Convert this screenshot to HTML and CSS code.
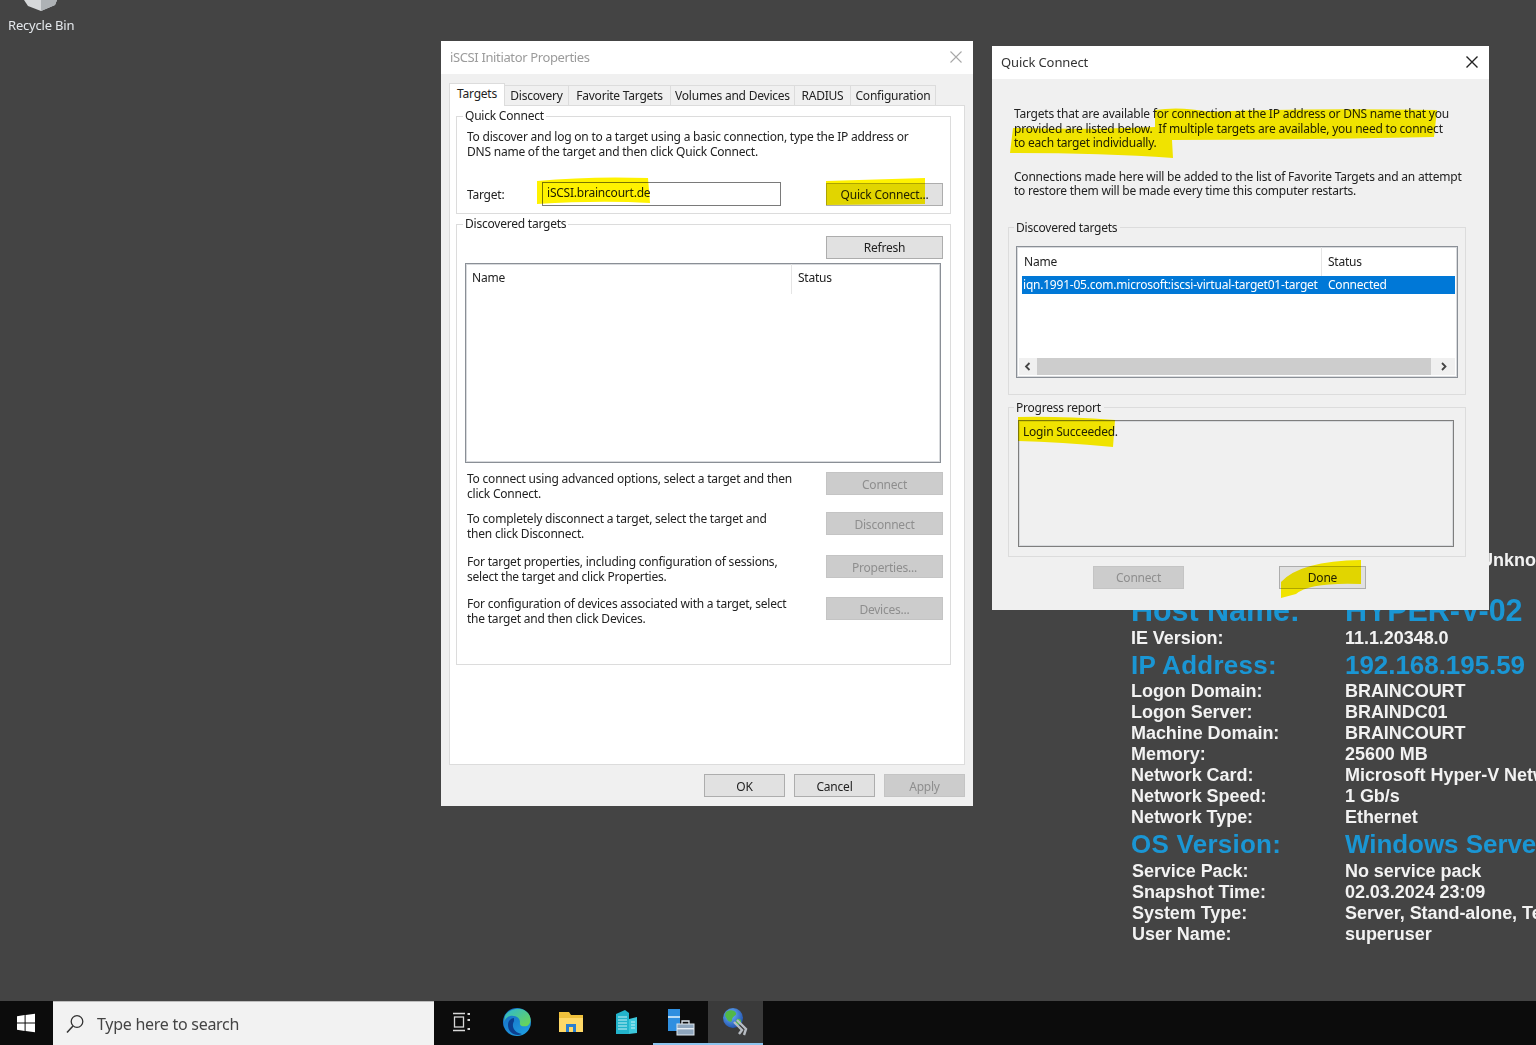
FILE: index.html
```html
<!DOCTYPE html>
<html lang="en">
<head>
  <meta charset="UTF-8">
  <title>iSCSI Initiator Properties</title>
  <link rel="stylesheet" href="styles.css">
</head>
<body>

  <div class="screen">
    <div class="desktop">

      <div class="recycle-bin">
        <svg class="recycle-icon" width="36" height="12" viewBox="0 0 36 12">
          <path d="M1 0 L34 0 L32 5 L18 11 L5 6 Z" fill="#d6d8da"/>
          <path d="M18 11 L32 5 L34 0 L18 0 Z" fill="#aeb2b5"/>
        </svg>
        <span>Recycle Bin</span>
      </div>

      <span class="info-cut">Unknown</span>

      <dl class="info">
        <dt class="host">Host Name:</dt><dd class="host">HYPER-V-02</dd>
        <dt>IE Version:</dt><dd>11.1.20348.0</dd>
        <dt class="big">IP Address:</dt><dd class="big">192.168.195.59</dd>
        <dt>Logon Domain:</dt><dd>BRAINCOURT</dd>
        <dt>Logon Server:</dt><dd>BRAINDC01</dd>
        <dt>Machine Domain:</dt><dd>BRAINCOURT</dd>
        <dt>Memory:</dt><dd>25600 MB</dd>
        <dt>Network Card:</dt><dd>Microsoft Hyper-V Network Adapter</dd>
        <dt>Network Speed:</dt><dd>1 Gb/s</dd>
        <dt>Network Type:</dt><dd>Ethernet</dd>
        <dt class="big os">OS Version:</dt><dd class="big os">Windows Server 2022</dd>
        <dt class="shifted">Service Pack:</dt><dd>No service pack</dd>
        <dt class="shifted">Snapshot Time:</dt><dd>02.03.2024 23:09</dd>
        <dt class="shifted">System Type:</dt><dd>Server, Stand-alone, Terminal</dd>
        <dt class="shifted">User Name:</dt><dd>superuser</dd>
      </dl>

      <!-- properties dialog -->
      <div class="window props">
        <div class="titlebar inactive">
          <span>iSCSI Initiator Properties</span>
          <svg class="close" width="12" height="12" viewBox="0 0 12 12"><path d="M0.5 0.5 L11.5 11.5 M11.5 0.5 L0.5 11.5"/></svg>
        </div>

        <div class="tabs">
          <div class="tab active">Targets</div>
          <div class="tab discovery">Discovery</div>
          <div class="tab favorite">Favorite Targets</div>
          <div class="tab volumes">Volumes and Devices</div>
          <div class="tab radius">RADIUS</div>
          <div class="tab config">Configuration</div>
        </div>

        <div class="tab-page">
          <fieldset class="group quick">
            <legend>Quick Connect</legend>
            <p class="intro">To discover and log on to a target using a basic connection, type the IP address or<br>DNS name of the target and then click Quick Connect.</p>
            <div class="target-row">
              <label>Target:</label>
              <div class="input">iSCSI.braincourt.de</div>
              <button class="btn wide">Quick Connect...</button>
            </div>
          </fieldset>

          <fieldset class="group discovered">
            <legend>Discovered targets</legend>
            <div class="refresh-row"><button class="btn wide">Refresh</button></div>
            <div class="list big-list">
              <div class="list-head">
                <div class="col-name">Name</div>
                <div class="col-status">Status</div>
              </div>
            </div>
            <div class="actions">
              <div class="action">
                <p>To connect using advanced options, select a target and then<br>click Connect.</p>
                <button class="btn wide" disabled>Connect</button>
              </div>
              <div class="action">
                <p>To completely disconnect a target, select the target and<br>then click Disconnect.</p>
                <button class="btn wide" disabled>Disconnect</button>
              </div>
              <div class="action">
                <p>For target properties, including configuration of sessions,<br>select the target and click Properties.</p>
                <button class="btn wide" disabled>Properties...</button>
              </div>
              <div class="action">
                <p>For configuration of devices associated with a target, select<br>the target and then click Devices.</p>
                <button class="btn wide" disabled>Devices...</button>
              </div>
            </div>
          </fieldset>
        </div>

        <div class="footer">
          <button class="btn">OK</button>
          <button class="btn">Cancel</button>
          <button class="btn" disabled>Apply</button>
        </div>
      </div>

      <!-- quick connect dialog -->
      <div class="window quick-win">
        <div class="titlebar">
          <span>Quick Connect</span>
          <svg class="close dark" width="12" height="12" viewBox="0 0 12 12"><path d="M0.5 0.5 L11.5 11.5 M11.5 0.5 L0.5 11.5"/></svg>
        </div>
        <div class="quick-body">
          <p>Targets that are available for connection at the IP address or DNS name that you<br>provided are listed below.&nbsp; If multiple targets are available, you need to connect<br>to each target individually.</p>
          <p class="second">Connections made here will be added to the list of Favorite Targets and an attempt<br>to restore them will be made every time this computer restarts.</p>

          <fieldset class="group found">
            <legend>Discovered targets</legend>
            <div class="list small-list">
              <div class="list-head">
                <div class="col-name">Name</div>
                <div class="col-status">Status</div>
              </div>
              <div class="list-row">
                <div class="col-name">iqn.1991-05.com.microsoft:iscsi-virtual-target01-target</div>
                <div class="col-status">Connected</div>
              </div>
              <div class="scrollbar">
                <svg width="18" height="17" viewBox="0 0 18 17"><path d="M10.5 5 L7 8.5 L10.5 12" /></svg>
                <div class="thumb"></div>
                <svg width="24" height="17" viewBox="0 0 24 17"><path d="M11 5 L14.5 8.5 L11 12" /></svg>
              </div>
            </div>
          </fieldset>

          <fieldset class="group progress">
            <legend>Progress report</legend>
            <div class="report">Login Succeeded.</div>
          </fieldset>

          <div class="quick-buttons">
            <button class="btn connect" disabled>Connect</button>
            <button class="btn done">Done</button>
          </div>
        </div>
      </div>

      <!-- marker pen on top of both dialogs -->
      <svg class="marker" width="1536" height="1001" viewBox="0 0 1536 1001">
        <path d="M537 181 Q590 176 648 178 L650 203 Q600 200 537 204 Z"/>
        <path d="M826 181 L925 178 L925 204 L826 205 Z"/>
        <path d="M1155 110 Q1180 106 1210 112 Q1300 108 1437 110 L1434 137 Q1300 140 1172 140 L1173 158 Q1100 153 1010 153 L1013 128 Q1090 130 1155 127 Z"/>
        <path d="M1018 417 Q1060 416 1115 420 L1113 447 Q1060 442 1018 441 Z"/>
        <path d="M1281 582 Q1300 561 1361 560 L1361 584 Q1310 582 1296 594 L1281 598 Z"/>
      </svg>
    </div>

    <div class="taskbar">
      <div class="start">
        <svg width="20" height="20" viewBox="0 0 20 20"><path d="M1 3.2 L8.6 2.1 V9.4 H1 Z M9.6 2 L19 0.7 V9.4 H9.6 Z M1 10.5 H8.6 V17.9 L1 16.8 Z M9.6 10.5 H19 V19.3 L9.6 18 Z" fill="#fff"/></svg>
      </div>
      <div class="search">
        <svg width="20" height="20" viewBox="0 0 20 20"><circle cx="12" cy="7.5" r="5.8" fill="none" stroke="#333" stroke-width="1.3"/><path d="M8 12 L2 18.5" stroke="#333" stroke-width="1.5"/></svg>
        <span>Type here to search</span>
      </div>
      <div class="task-icons">
        <div class="task-icon">
          <svg width="20" height="22" viewBox="0 0 20 22" fill="none" stroke="#d8d8d8" stroke-width="1.3"><path d="M1 2.5 H13 M1 19.5 H13"/><rect x="2.5" y="6" width="9" height="10"/><path d="M15.5 3 H18 M15.5 9 H18 M15.5 18 H18" stroke-width="2"/></svg>
        </div>
        <div class="task-icon">
          <svg width="30" height="30" viewBox="0 0 30 30">
            <defs>
              <linearGradient id="edgeBlue" x1="0" y1="0" x2="0.6" y2="1"><stop offset="0" stop-color="#1565c0"/><stop offset="1" stop-color="#1e9be0"/></linearGradient>
              <linearGradient id="edgeGreen" x1="0" y1="0" x2="1" y2="1"><stop offset="0" stop-color="#2bb6d8"/><stop offset="1" stop-color="#6fd84a"/></linearGradient>
            </defs>
            <circle cx="15" cy="15" r="14" fill="url(#edgeBlue)"/>
            <path d="M3 9 C7 1 20 -1 26 6 C30 11 29 17 25 19 C21 20 17 19 18 15 C18 10 12 8 8 9 C5 10 3 12 2 15 Z" fill="url(#edgeGreen)"/>
            <path d="M12 14 C9 19 12 26 20 27 C14 30 6 26 6 18 C6 14 9 11 12 11 Z" fill="#0c3f8f"/>
          </svg>
        </div>
        <div class="task-icon">
          <svg width="26" height="24" viewBox="0 0 26 24">
            <path d="M1 2 H11 L13 5 H25 V22 H1 Z" fill="#f0c13c"/>
            <path d="M1 8 H25 V22 H1 Z" fill="#ffd968"/>
            <path d="M8 22 V14 H18 V22 H15 V17 H11 V22 Z" fill="#2a7fd0"/>
          </svg>
        </div>
        <div class="task-icon">
          <svg width="24" height="28" viewBox="0 0 24 28">
            <path d="M2 6 L11 2 L15 5 V26 H2 Z" fill="#22b4cc"/>
            <path d="M15 11 L23 9 V25 L15 26 Z" fill="#3cc8dc"/>
            <path d="M4 9 H13 M4 12 H13 M4 15 H13 M4 18 H13 M4 21 H13 M17 14 H21 M17 17 H21 M17 20 H21" stroke="#c4f0f6" stroke-width="1"/>
          </svg>
        </div>
        <div class="task-icon underlined">
          <svg width="28" height="28" viewBox="0 0 28 28">
            <rect x="1" y="1" width="12" height="22" fill="#2f8fe0"/>
            <rect x="1" y="8" width="12" height="2" fill="#b9dcf6"/>
            <rect x="10" y="16" width="17" height="11" fill="#8fa6bd" stroke="#dfe7ee"/>
            <path d="M15 16 V13 H22 V16" fill="none" stroke="#dfe7ee" stroke-width="1.3"/>
            <rect x="10" y="20" width="17" height="1.4" fill="#e7eef4"/>
          </svg>
        </div>
        <div class="task-icon running">
          <svg width="28" height="30" viewBox="0 0 28 30">
            <defs>
              <radialGradient id="globe" cx="0.4" cy="0.35" r="0.8"><stop offset="0" stop-color="#6db8ff"/><stop offset="1" stop-color="#143f9e"/></radialGradient>
            </defs>
            <circle cx="12" cy="11" r="10" fill="url(#globe)"/>
            <path d="M5 5 C9 2 14 3 15 6 C16 9 11 9 11 13 C11 16 7 15 6 12 C5 10 3 9 5 5 Z M16 12 C19 11 21 13 20 16 C18 19 15 18 15 15 Z" fill="#52b848"/>
            <path d="M13 15 L21 23 L18 27 M16 13 L25 22 L23 28" fill="none" stroke="#b7bcc2" stroke-width="2.4"/>
          </svg>
        </div>
      </div>
    </div>
  </div>

</body>
</html>
```

FILE: styles.css
```css
* {
  box-sizing: border-box;
}

html, body {
  margin: 0;
  height: 100%;
  overflow: hidden;
}

body {
  font-family: "Noto Sans", sans-serif;
  font-size: 12px;
  letter-spacing: -0.22px;
  color: #222;
  background: #444;
}

.screen {
  height: 1045px;
  display: flex;
  flex-direction: column;
  filter: blur(0.45px);
}

.desktop {
  position: relative;
  flex: 1;
  background: #444444;
  overflow: hidden;
}

/* desktop items */
.recycle-bin {
  position: absolute;
  left: 8px;
  top: 0;
  width: 70px;
  color: #e4e8ec;
  font-size: 13px;
  letter-spacing: -0.2px;
  line-height: 18px;
}

.recycle-icon {
  display: block;
  margin: 0 0 4px 15px;
}

.info {
  position: absolute;
  left: 1131px;
  top: 592px;
  width: 405px;
  margin: 0;
  display: grid;
  grid-template-columns: 214px 1fr;
  font-family: "Liberation Sans", sans-serif;
  font-size: 18px;
  font-weight: bold;
  letter-spacing: -0.05px;
  line-height: 21px;
  color: #f2f2f2;
  white-space: nowrap;
}

.info dd {
  margin: 0;
}

.info .host {
  font-size: 30.5px;
  line-height: 36px;
  color: #1a96d4;
}

.info .big {
  font-size: 26px;
  line-height: 32px;
  color: #1a96d4;
}

.info dt.big {
  letter-spacing: 0.25px;
}

.info .os {
  line-height: 33px;
}

.info .shifted {
  padding-left: 1px;
}

.info-cut {
  position: absolute;
  left: 1480px;
  top: 550px;
  font-family: "Liberation Sans", sans-serif;
  font-size: 18px;
  font-weight: bold;
  letter-spacing: 0;
  line-height: 21px;
  color: #f2f2f2;
}

/* windows */
.window {
  position: absolute;
  background: #f0f0f0;
}

.props {
  left: 441px;
  top: 41px;
  width: 532px;
  height: 765px;
}

.quick-win {
  left: 992px;
  top: 46px;
  width: 497px;
  height: 564px;
}

.titlebar {
  height: 33px;
  background: #fff;
  display: flex;
  align-items: center;
  justify-content: space-between;
  padding: 0 11px 2px 9px;
  font-size: 13px;
  letter-spacing: -0.1px;
  color: #333;
}

.titlebar.inactive {
  color: #9b9b9b;
  letter-spacing: -0.37px;
}

.close {
  fill: none;
  stroke: #a8a8a8;
  stroke-width: 1.1;
}

.close.dark {
  stroke: #222;
  stroke-width: 1.4;
}

/* tabs */
.tabs {
  display: flex;
  align-items: flex-end;
  height: 31px;
  padding-left: 8px;
}

.tab {
  height: 20px;
  line-height: 20px;
  text-align: center;
  background: #f0f0f0;
  border: 1px solid #dcdcdc;
  border-bottom: none;
  border-left: none;
}

.tab.active {
  width: 56px;
  height: 23px;
  background: #fff;
  border-left: 1px solid #dcdcdc;
  position: relative;
  z-index: 1;
  margin-bottom: -1px;
}

.discovery { width: 64px; }
.favorite { width: 102px; }
.volumes { width: 124px; }
.radius { width: 56px; }
.config { width: 85px; }

.tab-page {
  width: 516px;
  height: 660px;
  margin-left: 8px;
  padding: 3px 0 0 6px;
  background: #fff;
  border: 1px solid #dcdcdc;
}

/* group boxes */
.group {
  margin: 0;
  min-width: 0;
  padding: 0 7px 0 10px;
  border: 1px solid #dcdcdc;
}

.group legend {
  margin-left: -4px;
  padding: 0 2px;
  line-height: 14px;
}

.quick {
  width: 495px;
  height: 105px;
}

.discovered {
  width: 495px;
  height: 448px;
  margin-top: 3px;
}

.group p,
.quick-body p {
  margin: 0;
  line-height: 14.5px;
}

.intro {
  padding-top: 7px;
}

.target-row {
  display: flex;
  align-items: center;
  margin-top: 23px;
}

.target-row label {
  width: 75px;
}

.input {
  width: 239px;
  height: 24px;
  line-height: 20px;
  padding-left: 4px;
  background: #fff;
  border: 1px solid #7a7a7a;
  margin-right: 45px;
}

/* buttons */
.btn {
  width: 81px;
  height: 23px;
  padding: 0;
  font: inherit;
  letter-spacing: inherit;
  color: #222;
  background: #e1e1e1;
  border: 1px solid #adadad;
}

.btn:disabled {
  color: #8e8e8e;
  background: #cccccc;
  border-color: #c4c4c4;
}

.btn.wide {
  width: 117px;
}

.action .btn,
.footer .btn {
  padding-top: 2px;
}

.refresh-row {
  display: flex;
  justify-content: flex-end;
  margin-top: 5px;
}

/* list views */
.list {
  background: #fff;
  border: 1px solid #8a8f96;
  box-shadow: inset 0 0 0 1px #d8dadd;
}

.big-list {
  width: 476px;
  height: 200px;
  margin: 4px 0 0 -2px;
}

.list-head {
  display: flex;
}

.big-list .list-head {
  height: 30px;
}

.big-list .col-name {
  width: 326px;
  padding-left: 6px;
  border-right: 1px solid #e5e5e5;
}

.big-list .col-status {
  padding-left: 6px;
}

.big-list .list-head > div {
  padding-top: 5px;
}

.small-list .list-head > div {
  padding-top: 6px;
}

.actions {
  display: grid;
  grid-template-rows: 40px 43px 42px 29px;
  margin-top: 9px;
}

.action {
  display: flex;
  justify-content: space-between;
  align-items: flex-start;
}

/* bottom row of the properties dialog */
.footer {
  display: flex;
  gap: 9px;
  padding: 9px 0 0 263px;
}

/* quick connect dialog */
.quick-body {
  padding: 28px 0 0 22px;
}

.quick-body .second {
  margin-top: 19px;
}

.found,
.progress {
  width: 458px;
  margin-left: -6px;
  padding: 0 7px;
}

.found {
  height: 174px;
  margin-top: 22px;
}

.found legend,
.progress legend {
  margin-left: -2px;
  padding: 0 3px 0 2px;
}

.progress {
  height: 156px;
  margin-top: 6px;
}

.small-list {
  position: relative;
  width: 442px;
  height: 132px;
  margin-top: 11px;
  display: flex;
  flex-direction: column;
}

.small-list .list-head {
  height: 29px;
}

.small-list .col-name {
  width: 305px;
  padding-left: 7px;
  flex: none;
}

.small-list .list-head .col-name {
  border-right: 1px solid #e5e5e5;
}

.small-list .col-status {
  padding-left: 6px;
}

.list-row {
  display: flex;
  height: 18px;
  line-height: 18px;
  margin: 0 2px 0 5px;
  color: #fff;
  background: #0078d7;
  white-space: nowrap;
}

.list-row .col-name {
  width: 300px;
  padding-left: 1px;
  overflow: hidden;
}

.scrollbar {
  display: flex;
  height: 17px;
  margin: auto 2px 2px 2px;
  background: #f0f0f0;
}

.scrollbar svg {
  flex: none;
  fill: none;
  stroke: #444;
  stroke-width: 1.8;
}

.thumb {
  flex: 1;
  background: #cdcdcd;
}

.report {
  width: 436px;
  height: 127px;
  margin: 5px 0 0 2px;
  padding: 2px 0 0 4px;
  border: 1px solid #7e7e7e;
  box-shadow: inset 0 0 0 1px #d8dadd;
}

.quick-buttons {
  display: flex;
  gap: 95px;
  margin: 9px 0 0 79px;
}

.connect {
  width: 91px;
}

.done {
  width: 87px;
}

/* highlighter */
.marker {
  position: absolute;
  left: 0;
  top: 0;
  fill: #fff200;
  mix-blend-mode: multiply;
  pointer-events: none;
}

/* taskbar */
.taskbar {
  display: flex;
  height: 44px;
  background: #0c0c0c;
}

.start {
  width: 53px;
  display: flex;
  align-items: center;
  justify-content: center;
  padding-right: 1px;
}

.search {
  width: 381px;
  display: flex;
  align-items: center;
  gap: 12px;
  padding-left: 12px;
  background: #f2f2f2;
  border-top: 1px solid #bdbdbd;
  font-size: 16px;
  letter-spacing: -0.27px;
  color: #444;
}

.task-icons {
  display: flex;
  margin-left: 1px;
}

.task-icon {
  width: 54.6px;
  display: flex;
  align-items: center;
  justify-content: center;
  border-bottom: 2px solid transparent;
}

.underlined {
  border-bottom-color: #8cc4ee;
}

.running {
  background: #3a3a3a;
  border-bottom-color: #8cc4ee;
}
```
